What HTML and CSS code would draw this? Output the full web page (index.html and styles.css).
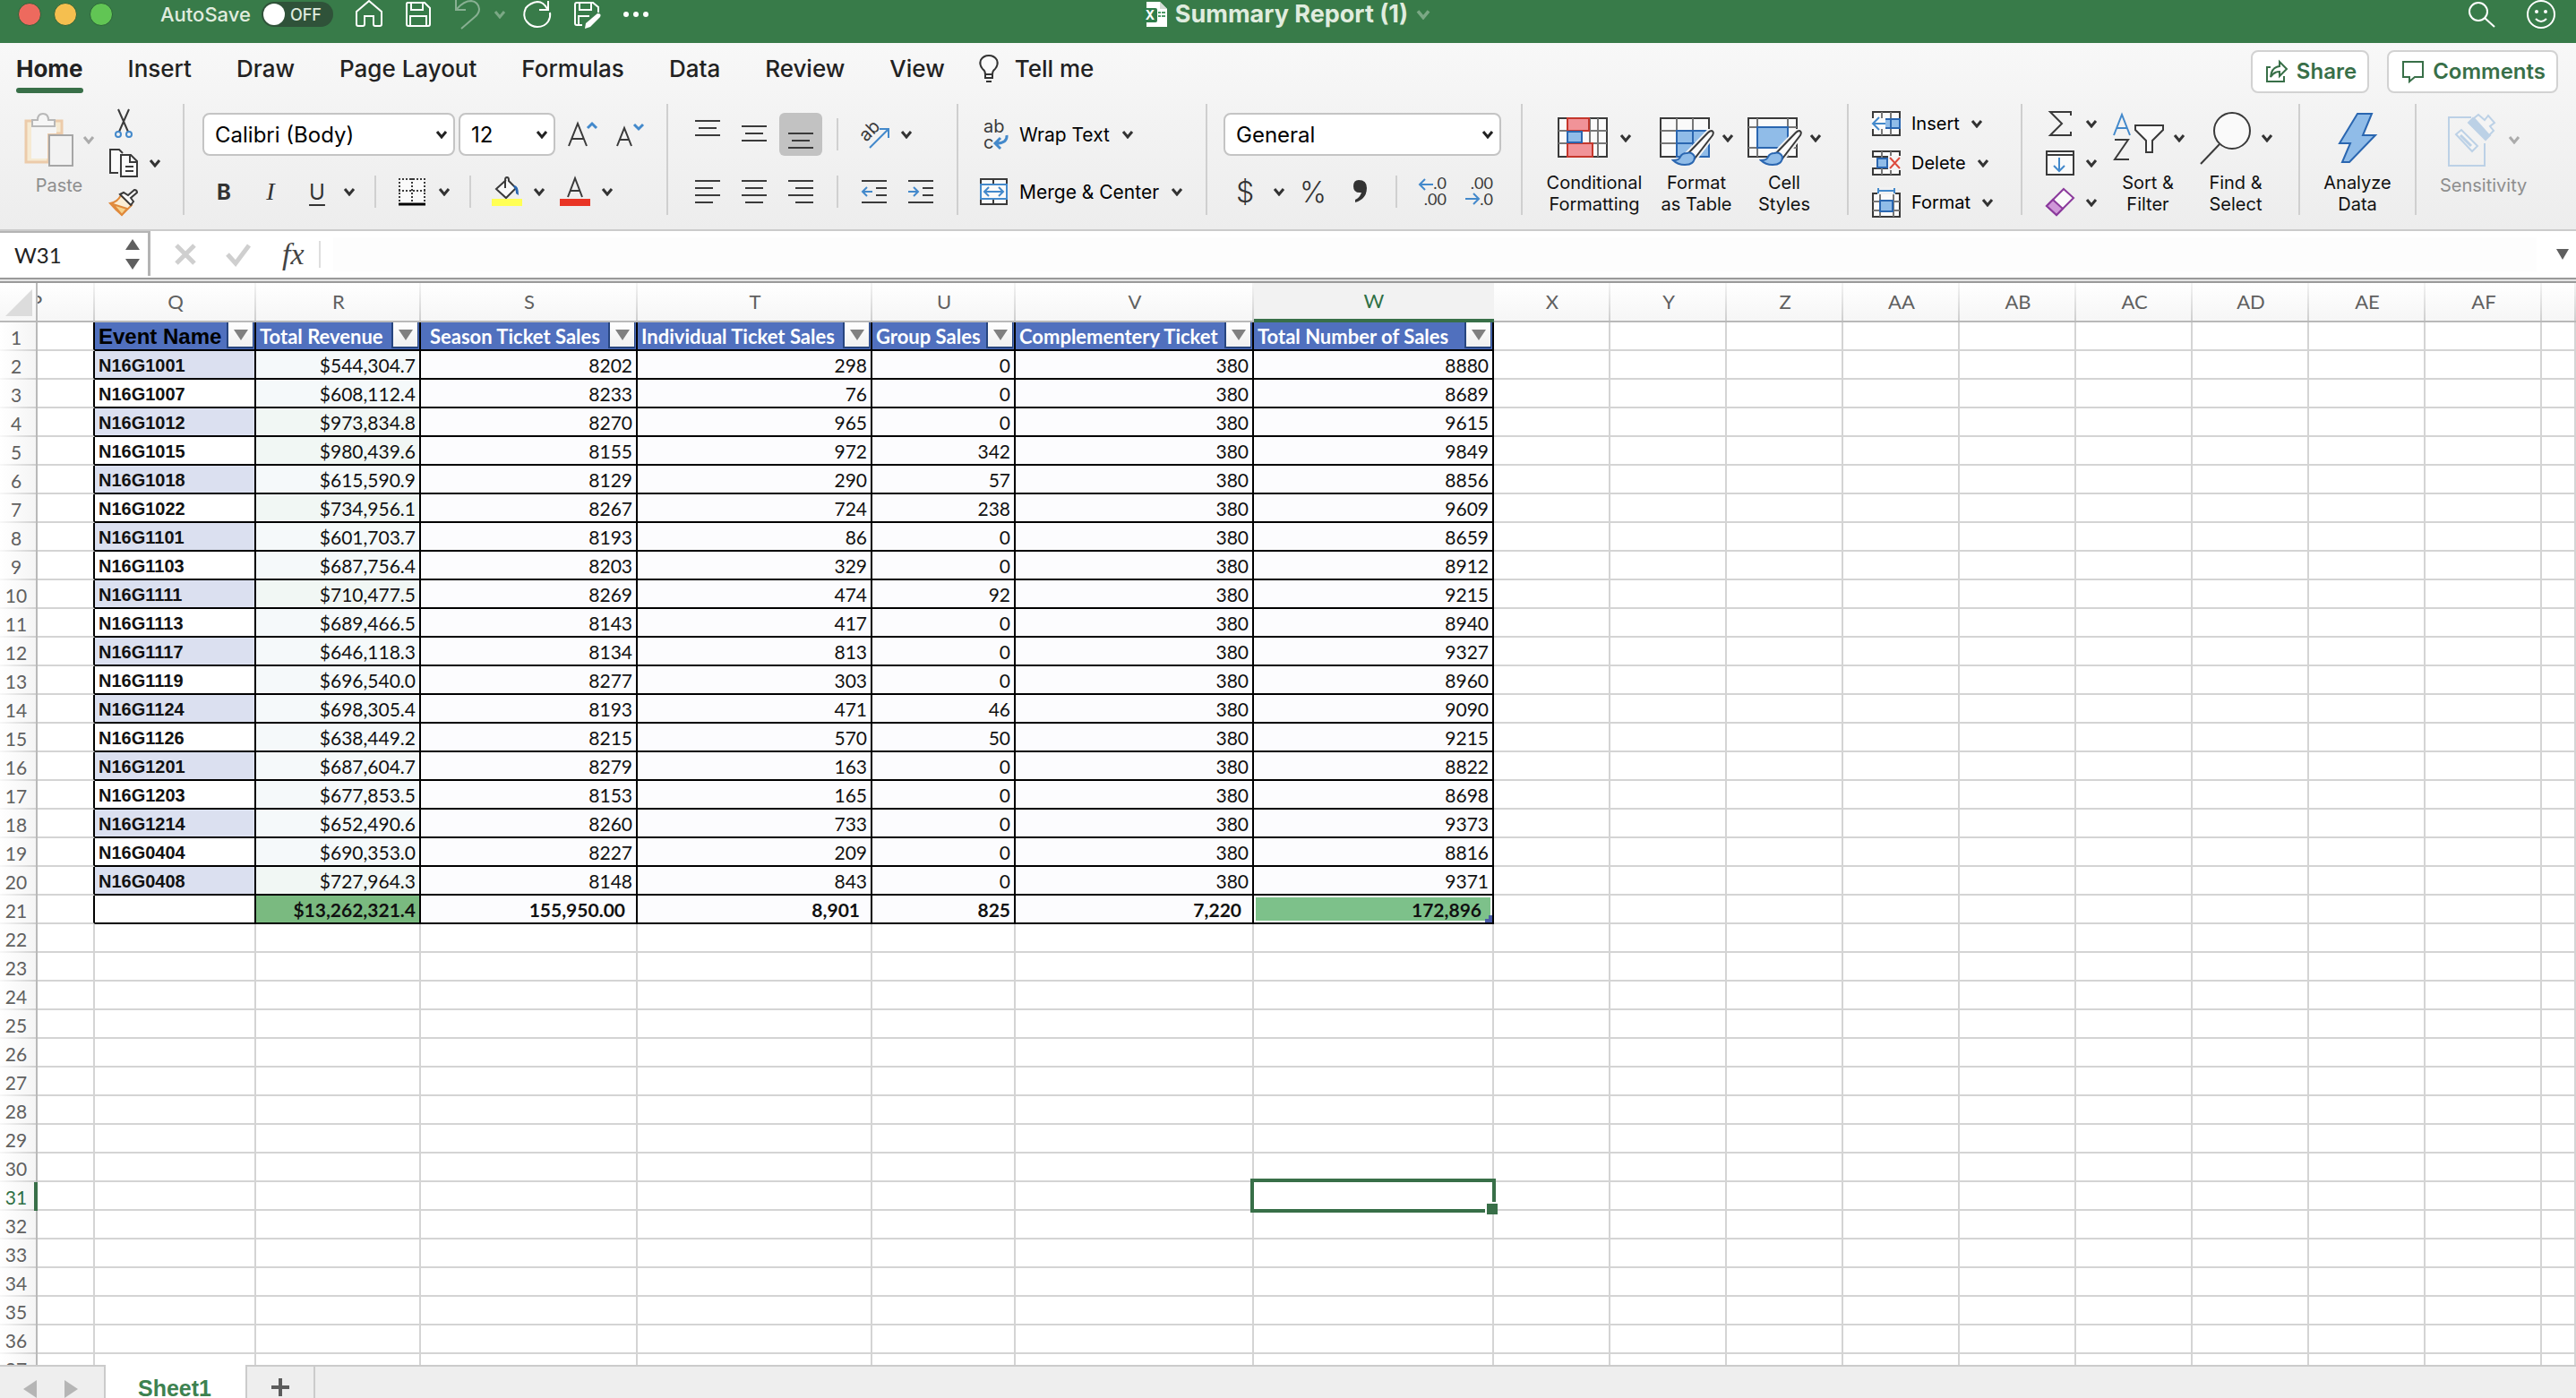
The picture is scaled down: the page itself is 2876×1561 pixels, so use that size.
FILE: index.html
```
<!DOCTYPE html>
<html lang="en">
<head>
    <meta charset="UTF-8">
    <meta name="viewport" content="width=device-width, initial-scale=1.0">
    <title>Summary Report (1)</title>
    <link rel="stylesheet" href="styles.css">
</head>
<body>
    <svg class="defs" aria-hidden="true">
        <symbol id="chev" viewBox="0 0 14 10"><path d="M2 2l5 6 5-6" fill="none" stroke="currentColor" stroke-width="3"/></symbol>
        <symbol id="brush" viewBox="0 0 48 42"><path d="M45 2q3 1 1 5L26 33l-7-6L41 4q2-2 4-2z" fill="#fafafa" stroke="#f4f4f4" stroke-width="6"/><path d="M45 2q3 1 1 5L26 33l-7-6L41 4q2-2 4-2z" fill="#fafafa" stroke="#3a3a3a" stroke-width="2"/><path d="M17 27q6-2 9 4 0 9-11 9-8 0-13-5 7 0 8-4 2-4 7-4z" fill="#90bce8" stroke="#2a66b0" stroke-width="2"/></symbol>
    </svg>

    <header class="titlebar">
        <div class="title-left">
            <span class="light red"></span>
            <span class="light yellow"></span>
            <span class="light green"></span>
            <label class="autosave" for="autosave">AutoSave</label>
            <span class="toggle"><input type="checkbox" id="autosave"><span class="knob"></span><span>OFF</span></span>
            <button class="tb" aria-label="Home"><svg width="32" height="32" viewBox="0 0 32 32"><path d="M2 13L16 1l14 12v14q0 2-2 2h-5q-2 0-2-2v-9H11v9q0 2-2 2H4q-2 0-2-2z"/></svg></button>
            <button class="tb" aria-label="Save"><svg width="32" height="32" viewBox="0 0 32 32"><path d="M4 3h19l6 6v18q0 2-2 2H5q-2 0-2-2V5q0-2 1-2zM8 3v8h13V3M7 29V18h18v11"/></svg></button>
            <button class="tb faded" aria-label="Undo"><svg width="32" height="32" viewBox="0 0 32 32"><path d="M3 0v11h11M4 10Q12 1 20 1q8 1 9 9 0 5-5 9L9 32"/></svg></button>
            <svg class="tb-chev faded" width="14" height="10"><use href="#chev"/></svg>
            <button class="tb" aria-label="Redo"><svg width="32" height="32" viewBox="0 0 32 32"><path d="M28 1v10H18M27 10Q23 2 16 2 8 3 3 9q-4 9 1 15 5 6 12 6 8 0 12-6 3-5 2-10"/></svg></button>
            <button class="tb" aria-label="Save as"><svg width="32" height="32" viewBox="0 0 32 32"><path d="M11 28H5q-2 0-2-2V5q0-2 2-2h18l6 5v6M8 3v8h13V3M7 28V18h12"/><path d="M28 15q5 0 3 4L20 30l-6 2 1-6z" fill="#fff" stroke="none"/></svg></button>
            <button class="tb" aria-label="More"><svg width="32" height="32" viewBox="0 0 32 32"><g fill="#fff" stroke="none"><circle cx="5" cy="16" r="3"/><circle cx="16" cy="16" r="3"/><circle cx="27" cy="16" r="3"/></g></svg></button>
        </div>
        <div class="title-mid">
            <svg width="28" height="30" viewBox="0 0 28 30"><path d="M4 1h15l8 8v20H4z" fill="#fff"/><path d="M19 1v8h8z" fill="#d5dcd5"/><path d="M17 12h3v2h-3zM21 12h4v2h-4zM17 16h3v2h-3zM21 16h4v2h-4z" fill="#4c9a66"/><rect y="8" width="16" height="16" rx="2" fill="#2f7d4a"/><text x="8" y="21" class="doc-x">X</text></svg>
            <h1>Summary Report (1)</h1>
            <svg class="title-chev" width="18" height="12"><use href="#chev"/></svg>
        </div>
        <div class="title-right">
            <button class="tb" aria-label="Search"><svg width="32" height="32" viewBox="0 0 32 32"><circle cx="13" cy="13" r="10"/><path d="M20 20l11 10"/></svg></button>
            <button class="tb" aria-label="Feedback"><svg width="34" height="32" viewBox="0 0 34 32"><circle cx="17" cy="16" r="15"/><path d="M11 21q6 6 12 0"/><g fill="#fff" stroke="none"><circle cx="12" cy="13" r="2"/><circle cx="22" cy="13" r="2"/></g></svg></button>
        </div>
    </header>

    <section class="ribbon">
        <nav class="tabs">
            <a href="#home" class="active">Home</a>
            <a href="#insert">Insert</a>
            <a href="#draw">Draw</a>
            <a href="#layout">Page Layout</a>
            <a href="#formulas">Formulas</a>
            <a href="#data">Data</a>
            <a href="#review">Review</a>
            <a href="#view">View</a>
            <a href="#tellme" class="tellme"><svg width="22" height="32" viewBox="0 0 22 32"><path d="M7 22q0-4-3-6-4-5-2-10 3-5 9-5t9 5q2 5-2 10-3 2-3 6zM7 22v4h8v-4" fill="#fafafa" stroke="#333" stroke-width="2"/><path d="M8 30h6" stroke="#333" stroke-width="2"/></svg>Tell me</a>
            <span class="spacer"></span>
            <button class="pill"><svg width="26" height="26" viewBox="0 0 26 26"><path d="M6 8H2v16h19v-6" /><path d="M16 2l8 8-8 8v-5q-6 0-10 6 1-11 10-12z"/></svg>Share</button>
            <button class="pill"><svg width="26" height="26" viewBox="0 0 26 26"><path d="M2 2h22v17H15l-6 5v-5H2z"/></svg>Comments</button>
        </nav>

        <div class="groups">
            <div class="group clipboard">
                <button class="big muted">
                    <span class="pic"><svg width="56" height="60" viewBox="0 0 56 60"><path d="M2 9h40v14H27v32H2z" fill="#f6ead2" stroke="#eccbaa" stroke-width="3"/><path d="M8 15h28v8H26v28H8z" fill="#f5f5f5"/><path d="M9 8h6q0-7 6-7t6 7h7v7H9z" fill="#f6f6f6" stroke="#b8b8b8" stroke-width="2"/><path d="M28 25h26v34H28z" fill="#f2f2f2" stroke="#a6a6a6" stroke-width="2"/></svg><svg class="chev"><use href="#chev"/></svg></span>
                    <span>Paste</span>
                </button>
                <div class="triple">
                    <button aria-label="Cut"><svg width="32" height="32" viewBox="0 0 32 32"><path d="M10 0l11 25M22 0L11 25" stroke="#3a3a3a" stroke-width="2"/><circle cx="10" cy="28" r="3" fill="none" stroke="#4389cb" stroke-width="2"/><circle cx="22" cy="28" r="3" fill="none" stroke="#4389cb" stroke-width="2"/></svg></button>
                    <button aria-label="Copy"><svg width="32" height="32" viewBox="0 0 32 32"><path d="M10 27H1V1h10l4 4" fill="#fafafa" stroke="#3a3a3a" stroke-width="2"/><path d="M13 7h11l7 7v17H13z" fill="#fafafa" stroke="#3a3a3a" stroke-width="2"/><path d="M23 7v8h8M18 20h9M18 25h9" fill="none" stroke="#3a3a3a" stroke-width="2"/></svg><svg class="chev"><use href="#chev"/></svg></button>
                    <button aria-label="Format painter"><svg width="32" height="32" viewBox="0 0 32 32"><path d="M13 8l12 11-11 11Q7 24 1 17q8-1 12-9z" fill="#fbeed5" stroke="#e08a3c" stroke-width="2"/><path d="M4 18l16 5-6 7z" fill="#f6d28c" stroke="#e08a3c" stroke-width="2"/><path d="M12 7l4-2 5 3 7-6q3 0 3 3l-7 6 3 4-3 4z" fill="#fafafa" stroke="#3a3a3a" stroke-width="2"/></svg></button>
                </div>
            </div>

            <div class="group font">
                <div class="row">
                    <select class="font-name" aria-label="Font"><option>Calibri (Body)</option></select>
                    <select class="font-size" aria-label="Font size"><option>12</option></select>
                    <button class="tool wide" aria-label="Increase font size"><svg width="34" height="32" viewBox="0 0 34 32"><path d="M2 29L12 4l10 25M5 21h14" fill="none" stroke="#3a3a3a" stroke-width="2"/><path d="M23 9l5-5 5 5" fill="none" stroke="#4389cb" stroke-width="3"/></svg></button>
                    <button class="tool wide" aria-label="Decrease font size"><svg width="34" height="32" viewBox="0 0 34 32"><path d="M4 29l8-20 8 20M7 22h10" fill="none" stroke="#3a3a3a" stroke-width="2"/><path d="M23 5l5 5 5-5" fill="none" stroke="#4389cb" stroke-width="3"/></svg></button>
                </div>
                <div class="row">
                    <button class="tool wide bold">B</button>
                    <button class="tool wide italic">I</button>
                    <button class="tool wide under">U</button>
                    <svg class="chev"><use href="#chev"/></svg>
                    <span class="sep"></span>
                    <button class="tool" aria-label="Borders"><svg width="32" height="32" viewBox="0 0 32 32"><path d="M1 2h30v28H1z" fill="#fafafa"/><path d="M1 2h30M2 1v28M30 1v28M1 15h30M16 1v28" fill="none" stroke="#3a3a3a" stroke-width="2" stroke-dasharray="2 2"/><path d="M1 30h30" stroke="#000" stroke-width="3"/></svg></button>
                    <svg class="chev after"><use href="#chev"/></svg>
                    <span class="sep"></span>
                    <button class="tool" aria-label="Fill color"><svg width="34" height="32" viewBox="0 0 34 32"><path d="M16 3L5 13l11 10 11-11-8-8V3q0-3-2-3t-2 3v9" fill="#fafafa" stroke="#3a3a3a" stroke-width="2"/><path d="M25 9q5 0 5 11l-3-2q0-5-3-8z" fill="#2a66b0"/><path d="M0 24h34v8H0z" fill="#ffff54"/></svg></button>
                    <svg class="chev after"><use href="#chev"/></svg>
                    <span class="sep clear"></span>
                    <button class="tool" aria-label="Font color"><svg width="34" height="32" viewBox="0 0 34 32"><path d="M9 22L17 1l8 21M12 15h10" fill="none" stroke="#3a3a3a" stroke-width="2"/><path d="M0 24h34v8H0z" fill="#e93425"/></svg></button>
                    <svg class="chev after"><use href="#chev"/></svg>
                </div>
            </div>

            <div class="group align">
                <div class="row lines">
                    <button class="tool wide" aria-label="Top align"><svg viewBox="0 0 28 32"><path d="M0 1h28M4 9h20M0 17h28"/></svg></button>
                    <button class="tool wide" aria-label="Middle align"><svg viewBox="0 0 28 32"><path d="M0 7h28M4 15h20M0 23h28"/></svg></button>
                    <button class="tool wide on" aria-label="Bottom align"><svg viewBox="0 0 28 32"><path d="M0 15h28M4 23h20M0 31h28"/></svg></button>
                    <span class="sep"></span>
                    <button class="tool wide" aria-label="Orientation"><svg class="big-svg" viewBox="0 0 34 34"><text x="0" y="0" class="ab" transform="translate(8 26) rotate(-45)">ab</text><path class="blue" d="M12 32l20-20M23 11h10v10"/></svg></button>
                    <svg class="chev"><use href="#chev"/></svg>
                </div>
                <div class="row lines">
                    <button class="tool wide" aria-label="Align left"><svg viewBox="0 0 28 32"><path d="M0 4h28M0 12h20M0 20h28M0 28h20"/></svg></button>
                    <button class="tool wide" aria-label="Center"><svg viewBox="0 0 28 32"><path d="M0 4h28M4 12h20M0 20h28M4 28h20"/></svg></button>
                    <button class="tool wide" aria-label="Align right"><svg viewBox="0 0 28 32"><path d="M0 4h28M8 12h20M0 20h28M8 28h20"/></svg></button>
                    <span class="sep"></span>
                    <button class="tool wide" aria-label="Decrease indent"><svg viewBox="0 0 28 32"><path d="M0 4h28M16 12h12M16 20h12M0 28h28"/><path class="blue" d="M12 16H1M6 11l-5 5 5 5"/></svg></button>
                    <button class="tool wide" aria-label="Increase indent"><svg viewBox="0 0 28 32"><path d="M0 4h28M16 12h12M16 20h12M0 28h28"/><path class="blue" d="M0 16h11M6 11l5 5-5 5"/></svg></button>
                </div>
            </div>

            <div class="group wrap">
                <div class="row">
                    <button class="text-btn"><svg width="36" height="36" viewBox="0 0 36 36"><text class="ab"><tspan x="6" y="16">ab</tspan><tspan x="6" y="34">c</tspan></text><path d="M32 19q1 9-12 9M25 22l-6 6 6 6" fill="none" stroke="#4389cb" stroke-width="3"/></svg>Wrap Text<svg class="chev"><use href="#chev"/></svg></button>
                </div>
                <div class="row">
                    <button class="text-btn"><svg width="36" height="32" viewBox="0 0 36 32"><path d="M3 2h29v28H3z" fill="#fafafa" stroke="#3a3a3a" stroke-width="2"/><path d="M17 2v28" stroke="#3a3a3a" stroke-width="2"/><path d="M3 8h29v16H3z" fill="#fafafa" stroke="#4389cb" stroke-width="2"/><path d="M8 16h19M12 11l-5 5 5 5M23 11l5 5-5 5" fill="none" stroke="#4389cb" stroke-width="2"/></svg>Merge &amp; Center<svg class="chev"><use href="#chev"/></svg></button>
                </div>
            </div>

            <div class="group number">
                <div class="row">
                    <select class="format" aria-label="Number format"><option>General</option></select>
                </div>
                <div class="row">
                    <button class="tool wide sign">$</button>
                    <svg class="chev"><use href="#chev"/></svg>
                    <button class="tool wide sign">%</button>
                    <button class="tool wide" aria-label="Comma style"><svg width="20" height="28" viewBox="0 0 20 28"><path d="M9 1q9 0 9 9 0 12-13 16v-3q5-2 7-8-9 1-9-7 0-7 6-7z" fill="#333"/></svg></button>
                    <span class="sep"></span>
                    <button class="tool wide" aria-label="Increase decimal"><svg width="34" height="36" viewBox="0 0 34 36"><text class="dec"><tspan x="32" y="15">.0</tspan><tspan x="32" y="33">.00</tspan></text><path d="M17 10H2M8 4l-6 6 6 6" fill="none" stroke="#4389cb" stroke-width="2"/></svg></button>
                    <button class="tool wide" aria-label="Decrease decimal"><svg width="34" height="36" viewBox="0 0 34 36"><text class="dec"><tspan x="32" y="15">.00</tspan><tspan x="32" y="33">.0</tspan></text><path d="M1 26h15M10 20l6 6-6 6" fill="none" stroke="#4389cb" stroke-width="2"/></svg></button>
                </div>
            </div>

            <div class="group styles">
                <button class="big cond">
                    <span class="pic"><svg width="60" height="56" viewBox="0 0 60 56"><path d="M1 6h54v43H1z" fill="#fafafa" stroke="#3a3a3a" stroke-width="2"/><path d="M11 6v43M36 6v43M45 6v43M1 20h54M1 34h54" stroke="#777" stroke-width="2"/><path d="M11 6h24v14H11zM11 34h28v15H11z" fill="#f19398" stroke="#c5372c" stroke-width="2"/><path d="M11 21h16v12H11z" fill="#90bce8" stroke="#2a66b0" stroke-width="2"/></svg><svg class="chev"><use href="#chev"/></svg></span>
                    <span>Conditional<br>Formatting</span>
                </button>
                <button class="big">
                    <span class="pic"><svg width="60" height="56" viewBox="0 0 60 56"><path d="M1 6h54v43H1z" fill="#fafafa" stroke="#3a3a3a" stroke-width="2"/><path d="M19 6v43M37 6v43M1 20h54M1 34h54" stroke="#777" stroke-width="2"/><path d="M19 20h36v29H19zM37 20v29M19 34h36" fill="#90bce8" stroke="#2a66b0" stroke-width="2"/><use href="#brush" x="13" y="18" width="48" height="42"/></svg><svg class="chev"><use href="#chev"/></svg></span>
                    <span>Format<br>as Table</span>
                </button>
                <button class="big">
                    <span class="pic"><svg width="60" height="56" viewBox="0 0 60 56"><path d="M1 6h54v43H1z" fill="#fafafa" stroke="#3a3a3a" stroke-width="2"/><path d="M11 6v43M45 6v43M1 16h54M1 39h54" stroke="#777" stroke-width="2"/><path d="M11 16h34v23H11z" fill="#90bce8" stroke="#2a66b0" stroke-width="2"/><use href="#brush" x="13" y="18" width="48" height="42"/></svg><svg class="chev"><use href="#chev"/></svg></span>
                    <span>Cell<br>Styles</span>
                </button>
            </div>

            <div class="group cells">
                <div class="triple">
                    <button><svg width="32" height="32" viewBox="0 0 32 32"><path d="M1 3h30v26H1z" fill="#fafafa" stroke="#3a3a3a" stroke-width="2"/><path d="M11 3v26M21 3v26M1 11h30M1 21h30" stroke="#777" stroke-width="2"/><path d="M12 11h19v10H12zM21 11v10" fill="#90bce8" stroke="#2a66b0" stroke-width="2"/><path d="M0 10h15v12H0z" fill="#fafafa"/><path d="M15 16H1M8 9l-7 7 7 7" fill="none" stroke="#4389cb" stroke-width="2"/></svg>Insert<svg class="chev"><use href="#chev"/></svg></button>
                    <button><svg width="32" height="32" viewBox="0 0 32 32"><path d="M1 3h30v6H1zM1 22h30v7H1z" fill="#fafafa" stroke="#3a3a3a" stroke-width="2"/><path d="M11 3v26M21 3v26" stroke="#777" stroke-width="2"/><path d="M6 11h11v10H6z" fill="#90bce8" stroke="#2a66b0" stroke-width="2"/><path d="M18 8h14v16H18z" fill="#f4f4f4"/><path d="M20 10l11 12M31 10L20 22" stroke="#dd4b3e" stroke-width="2"/></svg>Delete<svg class="chev"><use href="#chev"/></svg></button>
                    <button><svg width="32" height="34" viewBox="0 0 32 34"><path d="M1 7h30v26H1z" fill="#fafafa" stroke="#3a3a3a" stroke-width="2"/><path d="M6 0h20v8H6z" fill="#f2f2f2"/><path d="M9 8v25M24 8v25M1 16h30M1 26h30" stroke="#777" stroke-width="2"/><path d="M9 15h14v12H9z" fill="#90bce8" stroke="#2a66b0" stroke-width="2"/><path d="M7 4h18M7 1v6M25 1v6" stroke="#4389cb" stroke-width="2"/></svg>Format<svg class="chev"><use href="#chev"/></svg></button>
                </div>
            </div>

            <div class="group editing">
                <div class="triple">
                    <button aria-label="AutoSum"><svg width="32" height="32" viewBox="0 0 32 32"><path d="M28 7V3H5l13 13L5 29h23v-4" fill="none" stroke="#3a3a3a" stroke-width="2"/></svg><svg class="chev"><use href="#chev"/></svg></button>
                    <button aria-label="Fill"><svg width="32" height="32" viewBox="0 0 32 32"><path d="M1 3h30v26H1zM1 7h30" fill="#fafafa" stroke="#3a3a3a" stroke-width="2"/><path d="M15 10v15M9 19l6 6 6-6" fill="none" stroke="#4389cb" stroke-width="2"/></svg><svg class="chev"><use href="#chev"/></svg></button>
                    <button aria-label="Clear"><svg width="32" height="32" viewBox="0 0 32 32"><path d="M20 1l11 10-19 19L1 20z" fill="#fafafa" stroke="#8b3a9c" stroke-width="2"/><path d="M8 13l11 10-7 7L1 20z" fill="#cf97d8" stroke="#8b3a9c" stroke-width="2"/></svg><svg class="chev"><use href="#chev"/></svg></button>
                </div>
                <button class="big">
                    <span class="pic"><svg width="60" height="56" viewBox="0 0 60 56"><path d="M3 25L12 2l9 23M6 17h12" fill="none" stroke="#4389cb" stroke-width="2"/><path d="M4 30h15L4 52h16" fill="none" stroke="#3a3a3a" stroke-width="2"/><path d="M27 14h31v5L46 31v13h-7V31L27 19z" fill="#fafafa" stroke="#3a3a3a" stroke-width="2"/></svg><svg class="chev"><use href="#chev"/></svg></span>
                    <span>Sort &amp;<br>Filter</span>
                </button>
                <button class="big">
                    <span class="pic"><svg width="60" height="60" viewBox="0 0 60 60"><circle cx="37" cy="22" r="20" fill="#fafafa" stroke="#3a3a3a" stroke-width="2"/><path d="M23 37L2 59" stroke="#3a3a3a" stroke-width="2"/></svg><svg class="chev"><use href="#chev"/></svg></span>
                    <span>Find &amp;<br>Select</span>
                </button>
            </div>

            <div class="group analyze">
                <button class="big">
                    <span class="pic"><svg width="44" height="58" viewBox="0 0 44 58"><path d="M22 2h16L28 26h14L13 56H5l9-21H2z" fill="#90bce8" stroke="#2a66b0" stroke-width="2"/></svg></span>
                    <span>Analyze<br>Data</span>
                </button>
            </div>

            <div class="group sens">
                <button class="big muted">
                    <span class="pic"><svg width="60" height="60" viewBox="0 0 60 60"><path d="M28 5H3v54h40V34" fill="none" stroke="#bcd1e6" stroke-width="2"/><path d="M11 24l6-5 18 18-6 6z" fill="#f4f4f4" stroke="#bcd1e6" stroke-width="2"/><path d="M16 25l12 12" stroke="#bcd1e6" stroke-width="3"/><path d="M25 11l5-5 19 19-5 5z" fill="#bcd1e6" stroke="#bcd1e6" stroke-width="2"/><path d="M31 6l5-4 7 6 4-5 7 8-5 4 4 5-5 5z" fill="#f4f4f4" stroke="#bcd1e6" stroke-width="2"/></svg><svg class="chev"><use href="#chev"/></svg></span>
                    <span>Sensitivity</span>
                </button>
            </div>
        </div>
    </section>

    <div class="formula-bar">
        <div class="name-box">
            <input type="text" value="W31" aria-label="Name box">
            <div class="stepper">
                <button aria-label="Previous name"><svg width="16" height="12"><path d="M8 0l8 12H0z"/></svg></button>
                <button aria-label="Next name"><svg width="16" height="12"><path d="M8 12l8-12H0z"/></svg></button>
            </div>
        </div>
        <div class="fx-tools">
            <button aria-label="Cancel"><svg width="28" height="28" viewBox="0 0 28 28"><path d="M4 4l20 20M24 4L4 24" stroke="#cfcfcf" stroke-width="5"/></svg></button>
            <button aria-label="Enter"><svg width="30" height="28" viewBox="0 0 30 28"><path d="M3 14l9 10L27 4" fill="none" stroke="#cfcfcf" stroke-width="5"/></svg></button>
            <button class="fx">fx</button>
        </div>
        <input class="formula" type="text" aria-label="Formula">
        <button class="expand" aria-label="Expand formula bar"><svg width="14" height="12"><path d="M7 12l7-12H0z"/></svg></button>
    </div>

    <main class="sheet">
        <table id="grid"></table>
    </main>

    <footer class="sheet-tabs">
        <div class="arrows">
            <button aria-label="Previous sheet"><svg width="16" height="20"><path d="M0 10L15 0v20z"/></svg></button>
            <button aria-label="Next sheet"><svg width="16" height="20"><path d="M15 10L0 0v20z"/></svg></button>
        </div>
        <a href="#sheet1" class="sheet-tab">Sheet1</a>
        <button class="add" aria-label="New sheet"><svg width="20" height="20"><path d="M0 10h20M10 0v20" stroke="#5c5c5c" stroke-width="4"/></svg></button>
    </footer>

    <script src="grid.js"></script>
</body>
</html>
```

FILE: styles.css
```
* {
    box-sizing: border-box;
}
body {
    margin: 0;
    height: 100vh;
    overflow: hidden;
    display: flex;
    flex-direction: column;
    background: #fff;
    color: #111;
    font-family: Inter, sans-serif;
    font-size: 20px;
}
button {
    background: none;
    border: none;
    padding: 0;
    margin: 0;
    color: inherit;
    font: inherit;
    cursor: pointer;
}
svg {
    display: block;
    flex: none;
    overflow: visible;
}
a {
    color: inherit;
    text-decoration: none;
}
.defs {
    position: absolute;
    width: 0;
    height: 0;
}

/* title bar */
.titlebar {
    flex: none;
    display: grid;
    grid-template-columns: 1fr auto 1fr;
    height: 48px;
    padding: 0 22px 16px 20px;
    background: #387b49;
    color: #e0ecdf;
}
.title-left, .title-mid, .title-right {
    display: flex;
    align-items: center;
}
.title-right {
    justify-content: flex-end;
    gap: 34px;
}
.light {
    width: 26px;
    height: 26px;
    margin-right: 14px;
    border-radius: 50%;
    border: 1px solid #2b6339;
}
.red { background: #ed6a5e; }
.yellow { background: #f5bf4f; }
.green { background: #61c554; }
.autosave {
    margin-left: 39px;
    margin-right: 12px;
    font-size: 22px;
    font-weight: 500;
}
.toggle {
    position: relative;
    display: flex;
    align-items: center;
    width: 80px;
    height: 28px;
    margin-right: 24px;
    padding-left: 2px;
    border-radius: 14px;
    background: #2f5239;
    font-size: 18px;
    font-weight: 500;
}
.toggle input {
    position: absolute;
    inset: 0;
    margin: 0;
    opacity: 0;
}
.knob {
    width: 24px;
    height: 24px;
    margin-right: 6px;
    border-radius: 50%;
    background: #fff;
}
.tb {
    margin-right: 23px;
}
.tb svg {
    fill: none;
    stroke: #fff;
    stroke-width: 2;
}
.title-right .tb {
    margin: 0;
}
.faded {
    opacity: 0.4;
}
.tb-chev {
    margin: 0 19px 0 -10px;
}
.title-mid {
    gap: 8px;
}
h1 {
    margin: 0;
    font-size: 27px;
    line-height: 32px;
    font-weight: 700;
}
.doc-x {
    fill: #fff;
    font-size: 14px;
    font-weight: 700;
    text-anchor: middle;
}
.title-chev {
    opacity: 0.4;
}

/* ribbon */
.ribbon {
    flex: none;
    height: 210px;
    background: linear-gradient(#f8f8f8, #f3f3f3 40%, #ededed);
    border-bottom: 2px solid #cbcbcb;
}
.tabs {
    display: flex;
    align-items: center;
    gap: 50px;
    height: 68px;
    padding: 0 20px 10px 18px;
    font-size: 26px;
    font-weight: 500;
    line-height: 32px;
    color: #222;
}
.tabs a {
    position: relative;
}
.tabs .active {
    font-weight: 700;
}
.tabs .active::after {
    content: "";
    position: absolute;
    left: 0;
    right: 0;
    bottom: -11px;
    height: 6px;
    border-radius: 3px;
    background: #386f48;
}
.tabs .tellme {
    display: flex;
    align-items: center;
    gap: 18px;
    margin-left: -12px;
}
.spacer {
    flex: 1;
}
.pill {
    display: flex;
    align-items: center;
    gap: 9px;
    height: 48px;
    margin-top: 6px;
    padding: 0 12px 0 14px;
    border: 2px solid #d2d2d2;
    border-radius: 8px;
    background: #fff;
    color: #386f48;
    font-size: 24px;
    font-weight: 600;
}
.pill + .pill {
    margin-left: -30px;
}
.pill svg {
    fill: none;
    stroke: #386f48;
    stroke-width: 2;
}
.groups {
    display: flex;
}
.group {
    flex: none;
    height: 124px;
    border-right: 2px solid #cfcfcf;
}
.chev {
    width: 14px;
    height: 10px;
    color: #333;
}
.muted, .muted .chev {
    color: #8e8e8e;
}
.muted .chev {
    opacity: 0.7;
}
.clipboard, .styles, .editing, .analyze, .sens {
    display: flex;
}
.clipboard {
    width: 206px;
    padding-left: 24px;
    gap: 14px;
}
.font {
    width: 540px;
    padding: 10px 0 10px 18px;
}
.align {
    width: 324px;
    padding: 10px 0 10px 18px;
}
.wrap {
    width: 278px;
    padding: 10px 0 10px 22px;
}
.number {
    width: 352px;
    padding: 10px 0 10px 16px;
}
.styles {
    width: 364px;
    padding-left: 22px;
    gap: 14px;
}
.cells {
    width: 194px;
    padding-left: 26px;
}
.editing {
    width: 310px;
    padding-left: 26px;
    gap: 14px;
}
.analyze {
    width: 130px;
    justify-content: center;
}
.sens {
    flex: 1;
    padding-left: 26px;
    border-right: none;
}
.row {
    display: flex;
    align-items: center;
    height: 48px;
    margin-bottom: 16px;
}
.tool {
    display: flex;
    align-items: center;
    justify-content: center;
    width: 40px;
    height: 48px;
    color: #333;
}
.tool.wide {
    width: 52px;
}
.row .chev {
    margin: 0 3px;
}
.row .chev.after {
    margin-left: 9px;
}
.number .row .chev {
    margin: 0 5px;
}
.sep {
    width: 2px;
    height: 36px;
    margin: 0 20px 0 18px;
    background: #d0d0d0;
}
.sep.clear {
    width: 10px;
    margin: 0;
    background: none;
}
.align .sep, .number .sep {
    margin: 0 14px;
}
.bold {
    font-size: 24px;
    font-weight: 700;
}
.italic {
    font-family: "Liberation Serif", serif;
    font-size: 28px;
    font-style: italic;
}
.under {
    font-size: 24px;
    text-decoration: underline;
    text-underline-offset: 5px;
}
.sign {
    font-size: 32px;
    font-weight: 300;
}
select {
    height: 48px;
    padding: 0 12px;
    border: 2px solid #c4c4c4;
    border-radius: 8px;
    background: #fff url("data:image/svg+xml,%3Csvg xmlns='http://www.w3.org/2000/svg' width='14' height='10'%3E%3Cpath d='M2 2l5 6 5-6' fill='none' stroke='%23222' stroke-width='3'/%3E%3C/svg%3E") no-repeat right 6px center;
    appearance: none;
    color: #000;
    font: 24px Inter, sans-serif;
}
.font-name {
    width: 282px;
    margin: 0 4px 0 2px;
}
.font-size {
    width: 108px;
    margin-right: 4px;
}
.format {
    width: 310px;
    margin-left: 2px;
}
.lines svg:not(.chev) {
    width: 28px;
    height: 32px;
    fill: none;
    stroke: #3a3a3a;
    stroke-width: 2;
}
.lines svg.big-svg {
    width: 34px;
    height: 34px;
}
.lines .blue {
    stroke: #4389cb;
}
.lines .on {
    width: 48px;
    margin: 0 2px;
    border-radius: 6px;
    background: #c2c2c2;
}
.ab {
    fill: #3a3a3a;
    stroke: none;
    font-size: 20px;
}
.dec {
    fill: #3a3a3a;
    font-family: Lato, sans-serif;
    font-size: 18px;
    text-anchor: end;
}
.text-btn {
    display: flex;
    align-items: center;
    gap: 10px;
    color: #000;
    font-size: 21px;
}
.triple {
    display: grid;
    grid-template-rows: repeat(3, 44px);
}
.triple button {
    display: flex;
    align-items: center;
    gap: 12px;
    color: #000;
}
.big {
    display: flex;
    flex-direction: column;
    align-items: center;
    min-width: 84px;
    line-height: 24px;
}
.pic {
    display: flex;
    align-items: center;
    gap: 9px;
    height: 79px;
}
.cond {
    min-width: 116px;
}

/* formula bar */
.formula-bar {
    flex: none;
    display: flex;
    align-items: center;
    height: 58px;
    padding-bottom: 6px;
    background: linear-gradient(#9a9a9a 0 2px, #e4e4e4 2px 4px, #9a9a9a 4px 6px) bottom / 100% 6px no-repeat;
}
.name-box {
    display: flex;
    align-items: center;
    width: 168px;
    height: 50px;
    border-right: 3px solid #b4b4b4;
    border-top: 2px solid #b4b4b4;
    align-self: flex-start;
}
.name-box input {
    width: 140px;
    padding: 0 0 0 16px;
    border: none;
    background: none;
    font: 24px Lato, sans-serif;
    color: #222;
}
.stepper {
    display: grid;
    gap: 10px;
}
.stepper svg, .expand svg {
    fill: #5f5f5f;
}
.fx-tools {
    display: flex;
    align-items: center;
    gap: 30px;
    height: 30px;
    margin-right: 14px;
    padding: 0 16px 0 25px;
    border-right: 2px solid #dedede;
}
.fx {
    padding-left: 4px;
    font: italic 34px/30px "Liberation Serif", serif;
    color: #444;
}
.formula {
    flex: 1;
    height: 38px;
    border: none;
    background: #fdfdfd;
    font: 24px Lato, sans-serif;
}
.expand {
    margin: 0 8px 0 22px;
}

/* grid */
.sheet {
    flex: 1;
    min-height: 0;
    overflow: hidden;
}
table {
    width: 100%;
    table-layout: fixed;
    border-collapse: separate;
    border-spacing: 0;
    font-family: Lato, sans-serif;
    font-size: 21px;
}
th, td {
    height: 32px;
    padding: 2px 4px 0;
    line-height: 28px;
    white-space: nowrap;
    overflow: hidden;
}
td {
    border-right: 2px solid #d4d4d4;
    border-bottom: 2px solid #d4d4d4;
    text-align: right;
}
thead th {
    height: 44px;
    padding: 0;
    border-bottom: 2px solid #b9b9b9;
    background: linear-gradient(#f4f4f4, #cfcfcf) right / 2px 100% no-repeat, linear-gradient(#fff, #f6f6f6);
    color: #606060;
    font-size: 22px;
    font-weight: 400;
}
thead .corner {
    border-right: 2px solid #b9b9b9;
    background: linear-gradient(#fff, #f6f6f6);
}
.corner svg {
    margin: 2px 0 0 6px;
    fill: #dcdcdc;
}
thead .cut {
    text-align: left;
    text-indent: -8px;
}
thead .current {
    border-bottom: 4px solid #386f48;
    background: #f2f2f2;
    color: #2f7045;
}
tbody th {
    padding: 2px 4px 0 0;
    border-right: 2px solid #b9b9b9;
    background: linear-gradient(90deg, #f8f8f8, #d0d0d0) bottom / 100% 2px no-repeat, linear-gradient(90deg, #fff, #f5f5f5);
    color: #606060;
    font-weight: 400;
}
tbody .current {
    border-right: 4px solid #386f48;
    padding-right: 2px;
    color: #2f7045;
}
.data td {
    border-color: #000;
    background: #fcfcfe;
}
.data .edge {
    border-bottom-color: #d4d4d4;
    background: #fff;
}
.data .beyond {
    border-color: #d4d4d4;
    background: #fff;
}
.data .event {
    background: #fff;
    font: bold 20px/28px "Liberation Sans", sans-serif;
    text-align: left;
}
.data.band .event {
    background: #dbe0f0;
}
.data .revenue {
    background: #f5f9fa;
}
.data .revenue.high {
    background: #f1f7f4;
}
.data .head {
    padding: 0;
    background: #5070be;
}
.head-cell {
    display: flex;
    justify-content: space-between;
    height: 30px;
    padding: 0 1px 0 4px;
    color: #fff;
    font-size: 22px;
    font-weight: 700;
    line-height: 32px;
}
.head .dark {
    color: #000;
    font-family: "Liberation Sans", sans-serif;
    font-size: 24px;
}
.head .season {
    padding-left: 10px;
}
.filter {
    flex: none;
    display: flex;
    align-items: center;
    justify-content: center;
    width: 30px;
    height: 29px;
    border: solid #27457f;
    border-width: 0 1px 2px 2px;
    background: linear-gradient(#fff, #f0f0f0);
}
.filter svg {
    fill: #808080;
}
.total td {
    font-weight: 700;
}
.total .pad {
    padding-right: 12px;
}
.total .revenue {
    background: #7aba80;
}
.total .sum {
    position: relative;
    background: #7dc18a;
    box-shadow: inset 0 0 0 2px #fff;
}
.sum::after {
    content: "";
    position: absolute;
    right: 0;
    bottom: 0;
    width: 8px;
    height: 8px;
    background: linear-gradient(#4a5ba8, #4a5ba8) right / 4px 100% no-repeat, linear-gradient(#4a5ba8, #4a5ba8) bottom / 100% 4px no-repeat;
}
.selected {
    position: relative;
    overflow: visible;
}
.selected::before {
    content: "";
    position: absolute;
    inset: -4px;
    border: 4px solid #386f48;
    background: #fff;
}
.selected::after {
    content: "";
    position: absolute;
    right: -6px;
    bottom: -6px;
    width: 12px;
    height: 12px;
    border: solid #fff;
    border-width: 2px 0 0 2px;
    background: #386f48;
}

/* sheet tabs */
.sheet-tabs {
    flex: none;
    display: flex;
    height: 37px;
    overflow: hidden;
    background: #eee;
}
.sheet-tabs::after {
    content: "";
    flex: 1;
    border-top: 2px solid #cbcbcb;
}
.arrows, .add {
    border-top: 2px solid #cbcbcb;
    border-right: 2px solid #cbcbcb;
}
.arrows {
    display: flex;
    align-items: flex-end;
    gap: 30px;
    width: 118px;
    padding-left: 26px;
}
.arrows svg {
    fill: #b5b5b5;
}
.sheet-tab {
    padding: 10px 38px 0 36px;
    border-right: 2px solid #cbcbcb;
    background: #fff;
    color: #3d8250;
    font: bold 25px/32px "Liberation Sans", sans-serif;
}
.add {
    display: flex;
    justify-content: center;
    width: 76px;
    padding-top: 13px;
}
```

FILE: grid.js
```
const grid = document.getElementById('grid');

const columns = [
    ['P', 64], ['Q', 180], ['R', 184], ['S', 242], ['T', 262], ['U', 160], ['V', 266], ['W', 268],
    ['X', 130], ['Y', 130], ['Z', 130], ['AA', 130], ['AB', 130], ['AC', 130], ['AD', 130], ['AE', 130], ['AF', 130], ['', 0]
];

const headings = ['Event Name', 'Total Revenue', 'Season Ticket Sales', 'Individual Ticket Sales', 'Group Sales', 'Complementery Ticket', 'Total Number of Sales'];

const events = [
    ['N16G1001', '$544,304.7', 8202, 298, 0, 380, 8880],
    ['N16G1007', '$608,112.4', 8233, 76, 0, 380, 8689],
    ['N16G1012', '$973,834.8', 8270, 965, 0, 380, 9615],
    ['N16G1015', '$980,439.6', 8155, 972, 342, 380, 9849],
    ['N16G1018', '$615,590.9', 8129, 290, 57, 380, 8856],
    ['N16G1022', '$734,956.1', 8267, 724, 238, 380, 9609],
    ['N16G1101', '$601,703.7', 8193, 86, 0, 380, 8659],
    ['N16G1103', '$687,756.4', 8203, 329, 0, 380, 8912],
    ['N16G1111', '$710,477.5', 8269, 474, 92, 380, 9215],
    ['N16G1113', '$689,466.5', 8143, 417, 0, 380, 8940],
    ['N16G1117', '$646,118.3', 8134, 813, 0, 380, 9327],
    ['N16G1119', '$696,540.0', 8277, 303, 0, 380, 8960],
    ['N16G1124', '$698,305.4', 8193, 471, 46, 380, 9090],
    ['N16G1126', '$638,449.2', 8215, 570, 50, 380, 9215],
    ['N16G1201', '$687,604.7', 8279, 163, 0, 380, 8822],
    ['N16G1203', '$677,853.5', 8153, 165, 0, 380, 8698],
    ['N16G1214', '$652,490.6', 8260, 733, 0, 380, 9373],
    ['N16G0404', '$690,353.0', 8227, 209, 0, 380, 8816],
    ['N16G0408', '$727,964.3', 8148, 843, 0, 380, 9371]
];

const totals = ['', '$13,262,321.4', '155,950.00', '8,901', '825', '7,220', '172,896'];
const totalClasses = ['event', 'revenue', 'pad', 'pad', '', 'pad', 'pad sum'];

const rowCount = 37;
const selectedRow = 31;
const selectedColumn = 7;

function headingCell(text, i) {
    const cls = i === 0 ? 'dark' : i === 2 ? 'season' : '';
    return `<td class="head"><div class="head-cell ${cls}">${text}<button class="filter" aria-label="Filter ${text}"><svg width="16" height="12"><path d="M0 0h16L8 12z"/></svg></button></div></td>`;
}

function eventCell(value, i) {
    let cls = '';
    if (i === 0) cls = 'event';
    if (i === 1) cls = value > '$7' ? 'revenue high' : 'revenue';
    return `<td class="${cls}">${value}</td>`;
}

function buildRow(n) {
    const th = `<th class="${n === selectedRow ? 'current' : ''}">${n}</th>`;
    if (n > 21) {
        const cells = columns.map((c, i) => `<td class="${n === selectedRow && i === selectedColumn ? 'selected' : ''}"></td>`);
        return `<tr>${th}${cells.join('')}</tr>`;
    }
    let cells;
    if (n === 1) cells = headings.map(headingCell);
    else if (n === 21) cells = totals.map((v, i) => `<td class="${totalClasses[i]}">${v}</td>`);
    else cells = events[n - 2].map(eventCell);
    const cls = n === 21 ? 'data total' : n % 2 === 0 ? 'data band' : 'data';
    const rest = '<td class="beyond"></td>'.repeat(columns.length - 8);
    return `<tr class="${cls}">${th}<td class="edge"></td>${cells.join('')}${rest}</tr>`;
}

let html = '<colgroup><col style="width: 42px">';
columns.forEach(([, width]) => {
    html += width ? `<col style="width: ${width}px">` : '<col>';
});
html += '</colgroup><thead><tr><th class="corner"><svg width="30" height="30"><path d="M30 0v30H0z"/></svg></th>';
columns.forEach(([name], i) => {
    const cls = i === 0 ? 'cut' : i === selectedColumn ? 'current' : '';
    html += `<th class="${cls}">${name}</th>`;
});
html += '</tr></thead><tbody>';
for (let n = 1; n <= rowCount; n++) {
    html += buildRow(n);
}
grid.innerHTML = html + '</tbody>';
```
